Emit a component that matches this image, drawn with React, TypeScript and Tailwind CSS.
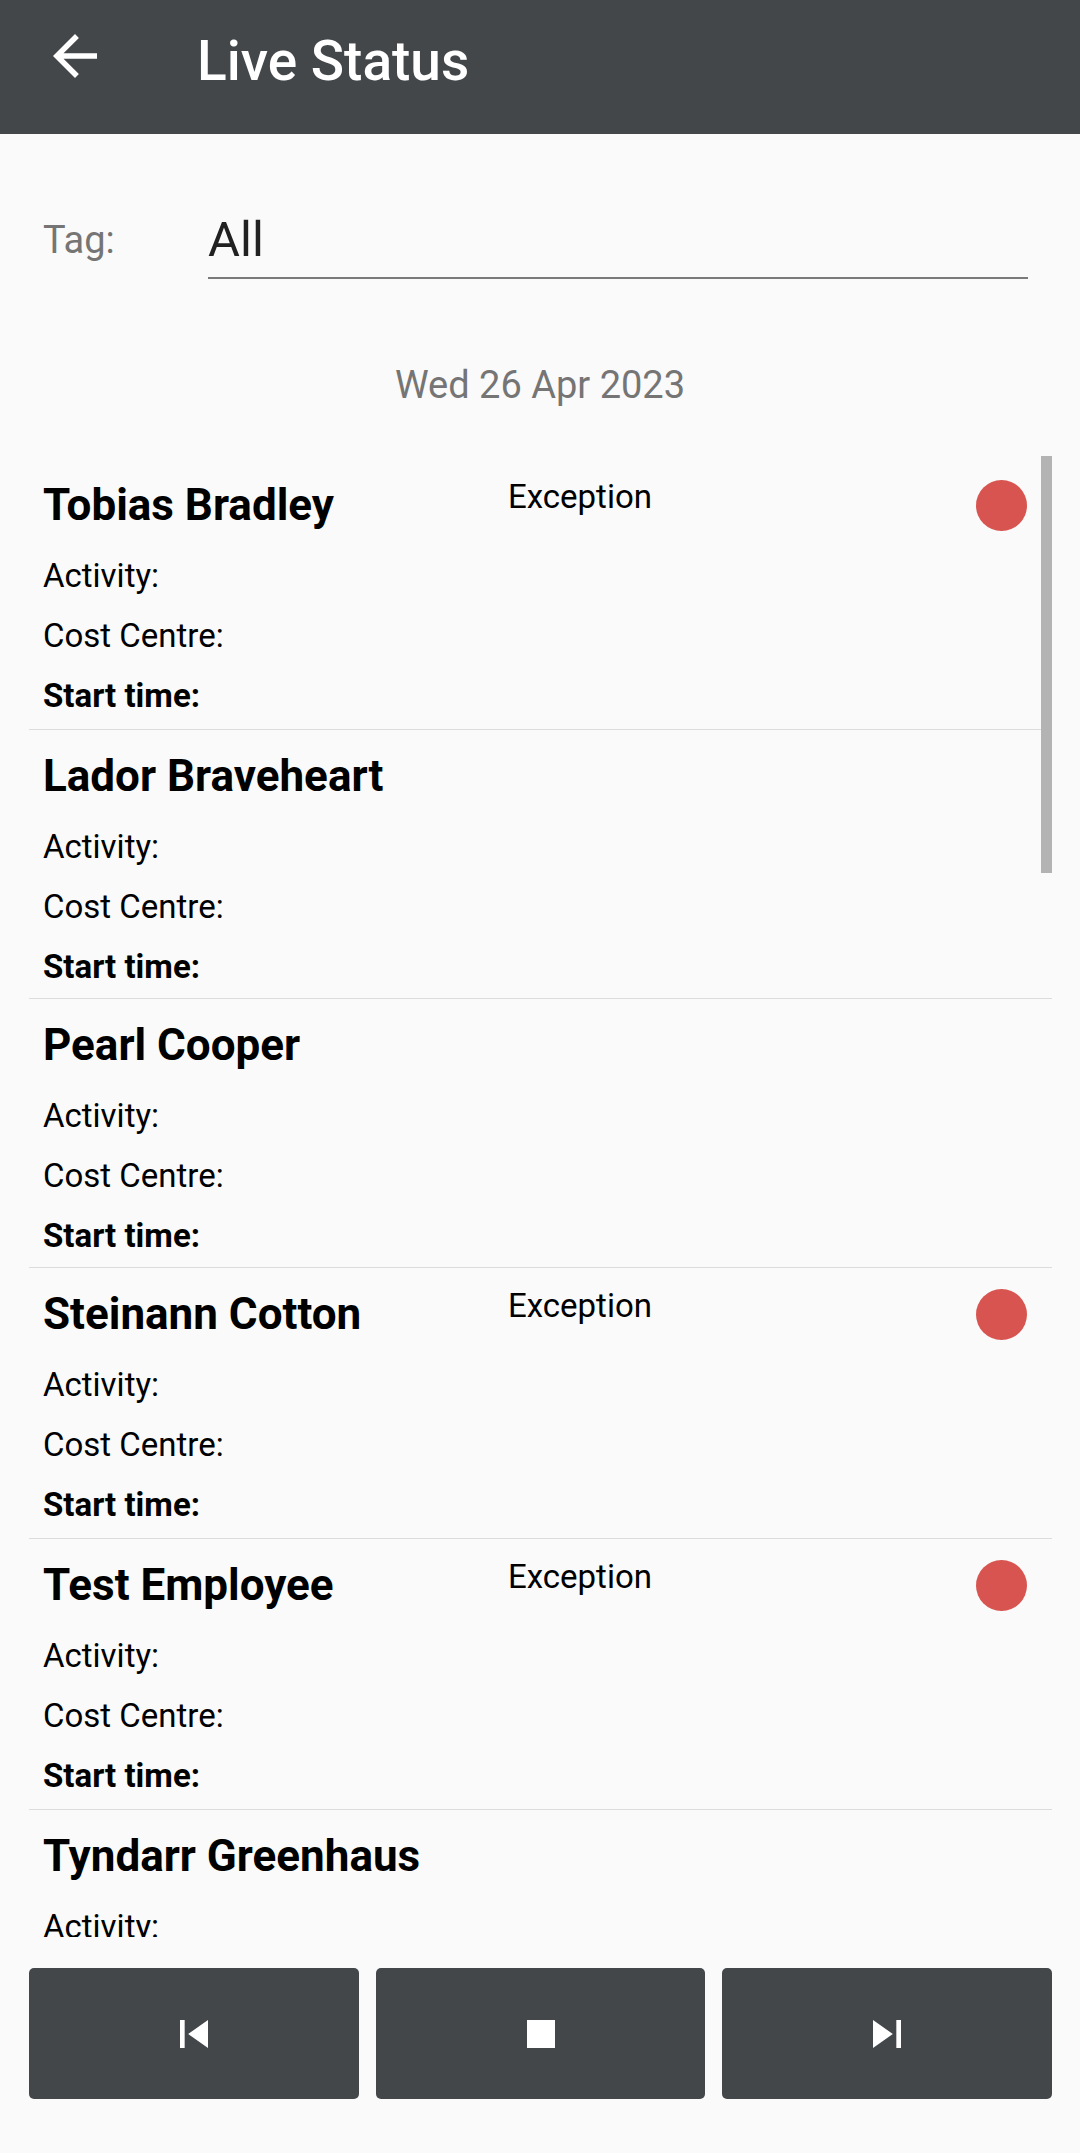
import React from "react";

type Person = {
  name: string;
  exception?: boolean;
};

const people: Person[] = [
  { name: "Tobias Bradley", exception: true },
  { name: "Lador Braveheart" },
  { name: "Pearl Cooper" },
  { name: "Steinann Cotton", exception: true },
  { name: "Test Employee", exception: true },
  { name: "Tyndarr Greenhaus" },
];

const PersonRow: React.FC<{ person: Person }> = ({ person }) => {
  return (
    <div
      className={`border-b border-[#dcdcdc] pl-[14px] pt-[16px] ${
        person.exception ? "pb-[3px]" : "pb-[1px]"
      }`}
    >
      <div className="flex items-start">
        <div className="w-[465px] text-[44px] font-bold leading-[60px] text-black">
          {person.name}
        </div>
        <div className="flex-1 mt-[2px] text-[33px] leading-[40px] text-black">
          {person.exception ? "Exception" : ""}
        </div>
        {person.exception && (
          <div className="mt-[5px] mr-[25px] h-[51px] w-[51px] rounded-full bg-[#d85450]" />
        )}
      </div>
      <div className="mt-[11px] text-[33px] leading-[60px] text-black">
        <div>Activity:</div>
        <div>Cost Centre:</div>
        <div className="font-bold">Start time:</div>
      </div>
    </div>
  );
};

const App: React.FC = () => {
  return (
    <div className="flex h-[2153px] w-[1080px] flex-col overflow-hidden bg-[#fafafa] font-[Roboto,sans-serif]">
      {/* Header */}
      <div className="flex h-[134px] shrink-0 items-start bg-[#43474a]">
        <svg
          className="ml-[42px] mt-[23px] h-[66px] w-[66px]"
          viewBox="0 0 24 24"
          fill="#ffffff"
        >
          <path d="M20 11H7.83l5.59-5.59L12 4l-8 8 8 8 1.41-1.41L7.83 13H20v-2z" />
        </svg>
        <h1 className="ml-[89px] mt-[29px] text-[55px] font-medium leading-[64px] text-white">
          Live Status
        </h1>
      </div>

      {/* Tag filter */}
      <div className="mt-[76px] flex items-start pl-[43px] pr-[52px]">
        <div className="w-[165px] text-[38px] leading-[60px] text-[#757575]">Tag:</div>
        <div className="flex-1 border-b-2 border-[#7a7a7a] pb-[7px] text-[49px] leading-[60px] text-[#212121]">
          All
        </div>
      </div>

      {/* Date */}
      <div className="mt-[81px] text-center text-[38px] leading-[50px] text-[#757575]">
        Wed 26 Apr 2023
      </div>

      {/* List */}
      <div className="relative ml-[29px] mr-[28px] mt-[46px] h-[1481px] shrink-0 overflow-hidden pt-[3px]">
        {people.map((p) => (
          <PersonRow key={p.name} person={p} />
        ))}
        <div className="absolute right-0 top-0 h-[417px] w-[11px] bg-[#b3b3b3]" />
      </div>

      {/* Controls */}
      <div className="mt-[31px] flex gap-[17px] pl-[29px] pr-[28px]">
        <button className="flex h-[131px] flex-1 items-center justify-center rounded-[5px] bg-[#43474a]">
          <svg className="h-[56px] w-[56px]" viewBox="0 0 24 24" fill="#ffffff">
            <path d="M6 6h2v12H6zm3.5 6l8.5 6V6z" />
          </svg>
        </button>
        <button className="flex h-[131px] flex-1 items-center justify-center rounded-[5px] bg-[#43474a]">
          <svg className="h-[56px] w-[56px]" viewBox="0 0 24 24" fill="#ffffff">
            <path d="M6 6h12v12H6z" />
          </svg>
        </button>
        <button className="flex h-[131px] flex-1 items-center justify-center rounded-[5px] bg-[#43474a]">
          <svg className="h-[56px] w-[56px]" viewBox="0 0 24 24" fill="#ffffff">
            <path d="M6 18l8.5-6L6 6v12zM16 6v12h2V6h-2z" />
          </svg>
        </button>
      </div>
    </div>
  );
};

export default App;
